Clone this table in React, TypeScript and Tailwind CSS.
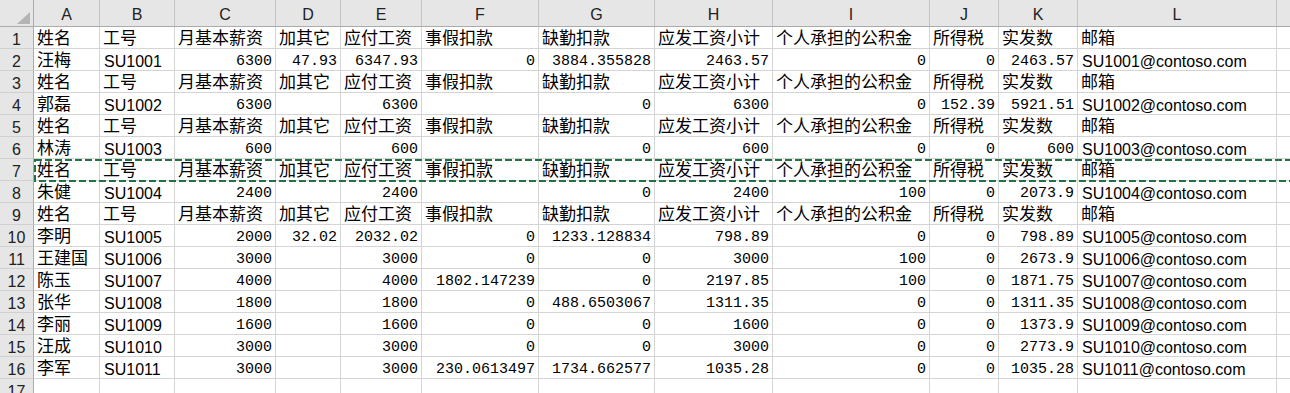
import React from 'react';

// 列の幅（右の罫線を含む）
const COLS = [
  { label: 'A', w: 'w-[66px]' },
  { label: 'B', w: 'w-[75px]' },
  { label: 'C', w: 'w-[101px]' },
  { label: 'D', w: 'w-[65px]' },
  { label: 'E', w: 'w-[81px]' },
  { label: 'F', w: 'w-[117px]' },
  { label: 'G', w: 'w-[116px]' },
  { label: 'H', w: 'w-[118px]' },
  { label: 'I', w: 'w-[157px]' },
  { label: 'J', w: 'w-[69px]' },
  { label: 'K', w: 'w-[79px]' },
  { label: 'L', w: 'w-[199px]' },
];

const HEAD = ['姓名', '工号', '月基本薪资', '加其它', '应付工资', '事假扣款', '缺勤扣款', '应发工资小计', '个人承担的公积金', '所得税', '实发数', '邮箱'];

const ROWS: string[][] = [
  HEAD,
  ['汪梅', 'SU1001', '6300', '47.93', '6347.93', '0', '3884.355828', '2463.57', '0', '0', '2463.57', 'SU1001@contoso.com'],
  HEAD,
  ['郭磊', 'SU1002', '6300', '', '6300', '', '0', '6300', '0', '152.39', '5921.51', 'SU1002@contoso.com'],
  HEAD,
  ['林涛', 'SU1003', '600', '', '600', '', '0', '600', '0', '0', '600', 'SU1003@contoso.com'],
  HEAD,
  ['朱健', 'SU1004', '2400', '', '2400', '', '0', '2400', '100', '0', '2073.9', 'SU1004@contoso.com'],
  HEAD,
  ['李明', 'SU1005', '2000', '32.02', '2032.02', '0', '1233.128834', '798.89', '0', '0', '798.89', 'SU1005@contoso.com'],
  ['王建国', 'SU1006', '3000', '', '3000', '0', '0', '3000', '100', '0', '2673.9', 'SU1006@contoso.com'],
  ['陈玉', 'SU1007', '4000', '', '4000', '1802.147239', '0', '2197.85', '100', '0', '1871.75', 'SU1007@contoso.com'],
  ['张华', 'SU1008', '1800', '', '1800', '0', '488.6503067', '1311.35', '0', '0', '1311.35', 'SU1008@contoso.com'],
  ['李丽', 'SU1009', '1600', '', '1600', '0', '0', '1600', '0', '0', '1373.9', 'SU1009@contoso.com'],
  ['汪成', 'SU1010', '3000', '', '3000', '0', '0', '3000', '0', '0', '2773.9', 'SU1010@contoso.com'],
  ['李军', 'SU1011', '3000', '', '3000', '230.0613497', '1734.662577', '1035.28', '0', '0', '1035.28', 'SU1011@contoso.com'],
  ['', '', '', '', '', '', '', '', '', '', '', ''],
];

const Cell: React.FC<{ value: string; w: string }> = ({ value, w }) => {
  const isNum = /^[\d.]+$/.test(value);
  const isCjk = /[\u4e00-\u9fff]/.test(value);
  let cls = "pl-[4px] pt-[2px] font-['Liberation_Sans',Arial,sans-serif] text-[16px] leading-[21px]";
  if (isNum) cls = "justify-end pr-[3px] pt-[2px] font-['Liberation_Mono',monospace] text-[15px] leading-[21px]";
  else if (isCjk) cls = "pl-[3px] font-['Noto_Sans_CJK_SC',sans-serif] text-[17px] leading-[19px]";
  return (
    <div className={`${w} h-[22px] shrink-0 flex whitespace-nowrap border-r border-b border-[#d4d4d4] text-black ${cls}`}>
      {value}
    </div>
  );
};

const App: React.FC = () => {
  return (
    <div className="relative w-[1290px] h-[393px] overflow-hidden bg-white">
      {/* 列見出し */}
      <div className="flex h-[27px] bg-[#e6e6e6] border-b border-[#ababab]">
        <div className="relative w-[34px] shrink-0 border-r border-[#ababab]">
          <svg className="absolute left-0 top-0" width="34" height="26">
            <polygon points="30,12 30,24 17,24" fill="#b4b4b4" />
          </svg>
        </div>
        {COLS.map((c) => (
          <div
            key={c.label}
            className={`${c.w} shrink-0 border-r border-[#c4c4c4] pt-[4px] text-center font-['Liberation_Sans',Arial,sans-serif] text-[16px] leading-[21px] text-[#222]`}
          >
            {c.label}
          </div>
        ))}
        <div className="flex-1" />
      </div>

      {/* 行 */}
      {ROWS.map((row, i) => (
        <div key={i} className="flex">
          <div className="w-[34px] h-[22px] shrink-0 bg-[#e6e6e6] border-r border-b border-r-[#ababab] border-b-[#d0d0d0] pt-[2px] text-center font-['Liberation_Sans',Arial,sans-serif] text-[16px] leading-[21px] text-[#222]">
            {i + 1}
          </div>
          {COLS.map((c, j) => (
            <Cell key={c.label} value={row[j]} w={c.w} />
          ))}
          <div className="flex-1 h-[22px] border-b border-[#d4d4d4]" />
        </div>
      ))}

      {/* コピー範囲の点線 */}
      <svg className="pointer-events-none absolute left-[33px] top-[158px]" width="1300" height="26">
        <rect x="2" y="2" width="1400" height="21" fill="none" stroke="#217346" strokeWidth="2" strokeDasharray="7 3" />
      </svg>
    </div>
  );
};

export default App;
